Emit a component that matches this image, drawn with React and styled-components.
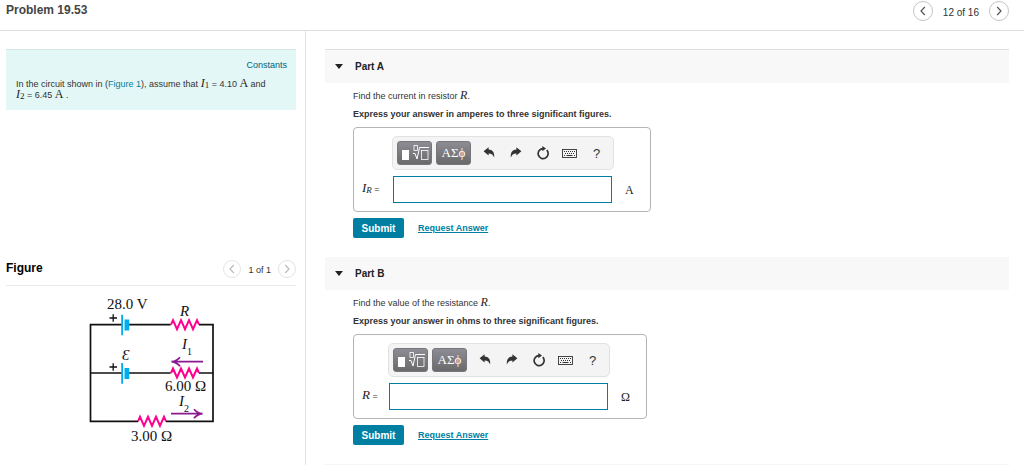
import React, { useState } from 'react';
import styled, { createGlobalStyle } from 'styled-components';

const GlobalStyle = createGlobalStyle`
  * {
    box-sizing: border-box;
  }

  body {
    margin: 0;
    background: #fff;
    color: #333;
    font-family: 'Liberation Sans', Arial, sans-serif;
    font-size: 9px;
    line-height: 11px;
  }

  button,
  input {
    font-family: inherit;
  }
`;

const Page = styled.div`
  display: flex;
  flex-direction: column;
  min-height: 100vh;
`;

const Header = styled.header`
  display: flex;
  justify-content: space-between;
  align-items: flex-start;
  height: 31px;
  padding: 1px 15px 0 6px;
  border-bottom: 1px solid #dcdcdc;
`;

const Title = styled.h1`
  margin: 0;
  font-size: 12px;
  line-height: 18px;
  color: #444;
`;

const Pager = styled.nav`
  display: flex;
  align-items: center;
  gap: ${props => (props.$small ? '7px' : '10px')};
  font-size: ${props => (props.$small ? '9px' : '10px')};
  color: #333;
`;

const PagerLabel = styled.span`
  padding-top: 3px;
`;

const PagerButton = styled.button`
  display: flex;
  align-items: center;
  justify-content: center;
  width: ${props => (props.$small ? '18px' : '20px')};
  height: ${props => (props.$small ? '18px' : '20px')};
  padding: 0;
  border: 1px solid ${props => (props.$small ? '#e4e4e4' : '#c4c4c4')};
  border-radius: 50%;
  background: #fff;
  color: ${props => (props.$small ? '#bbb' : '#555')};
`;

const Columns = styled.div`
  display: flex;
  flex: 1;
`;

const Side = styled.aside`
  flex: 0 0 306px;
  padding: 18px 9px 0 6px;
  border-right: 1px solid #dfe1ea;
`;

const Intro = styled.section`
  min-height: 61px;
  padding: 10px 9px 8px 10px;
  border-top: 1px solid #d3e4e3;
  background: #e3f7f6;
`;

const Constants = styled.div`
  margin-bottom: 8px;
  text-align: right;

  a {
    color: #00627c;
    text-decoration: none;
  }
`;

const Text = styled.p`
  margin: 0;

  a {
    color: #007fa3;
    text-decoration: none;
  }
`;

const IntroText = styled(Text)`
  padding-right: 12px;
`;

const Math = styled.span`
  font-family: 'Liberation Serif', 'Times New Roman', serif;
  font-size: 12px;
  line-height: 0;
  color: #222;

  sub {
    font-size: 9px;
    vertical-align: -1px;
  }
`;

const FigureHeader = styled.div`
  display: flex;
  justify-content: space-between;
  align-items: center;
  height: 28px;
  margin-top: 148px;
  padding-bottom: 6px;
  border-bottom: 1px solid #e8e8e8;
`;

const FigureTitle = styled.h2`
  margin: 0;
  font-size: 12px;
  color: #000;
`;

const Circuit = styled.svg`
  display: block;
  margin: 8px auto 0;
  font-family: 'Liberation Serif', 'Times New Roman', serif;
  font-size: 15px;
  fill: #111;
`;

const Main = styled.main`
  flex: 1;
  padding: 18px 15px 0 19px;
`;

const Parts = styled.div`
  border-top: 1px solid #e0e0e0;
  border-bottom: 1px solid #f4f4f4;
`;

const Part = styled.section`
  padding-bottom: 19px;
`;

const PartHeader = styled.h2`
  display: flex;
  align-items: center;
  gap: 12px;
  height: 33px;
  margin: 0;
  padding-left: 10px;
  background: #f8f8f8;
  color: #222;
  font-size: 10px;
`;

const PartBody = styled.div`
  padding: 8px 0 0 28px;
`;

const Instruction = styled.p`
  margin: 7px 0;
  font-weight: bold;
`;

const AnswerBox = styled.div`
  display: grid;
  grid-template-columns: ${props => props.$labelWidth} 222px 36px;
  row-gap: 6px;
  align-items: center;
  width: max-content;
  padding: 8px 0 8px 8px;
  border: 1px solid #b4b4b4;
  border-radius: 4px;
`;

const Toolbar = styled.div`
  grid-column: 2;
  display: flex;
  align-items: center;
  height: 34px;
  padding-left: 4px;
  border: 1px solid #e2e2e2;
  border-radius: 5px;
  background: #f4f4f4;
`;

const PaletteButton = styled.button`
  display: flex;
  align-items: center;
  justify-content: center;
  width: 35px;
  height: 24px;
  margin-right: 4px;
  padding: 0;
  border: 1px solid #77777b;
  border-radius: 3px;
  background: linear-gradient(#8d8c94, #6a6a6c);
  color: #fff;
  font-family: 'Liberation Serif', 'Times New Roman', serif;
  font-size: 13px;
`;

const ToolButton = styled.button`
  display: flex;
  align-items: center;
  justify-content: center;
  width: 27px;
  height: 24px;
  padding: 0;
  border: 0;
  background: none;
  color: #333;
  font-size: 13px;
`;

const AnswerLabel = styled.label`
  grid-column: 1;
  white-space: nowrap;

  ${Math} {
    font-size: 13px;
  }
`;

const AnswerInput = styled.input`
  width: 219px;
  height: 27px;
  margin-left: 1px;
  padding: 0 6px;
  border: 1px solid #007fa3;
  background: #fff;
  font-size: 12px;
  outline: none;
`;

const Unit = styled(Math)`
  padding-left: 11px;
`;

const Actions = styled.div`
  display: flex;
  align-items: center;
  gap: 14px;
  margin-top: 6px;
`;

const SubmitButton = styled.button`
  width: 51px;
  height: 20px;
  padding: 0;
  border: 0;
  border-radius: 2px;
  background: #007fa3;
  color: #fff;
  font-size: 10px;
  font-weight: bold;
`;

const RequestLink = styled.a`
  color: #007fa3;
  font-weight: bold;
`;

const Chevron = ({ left, size = 10 }) => (
  <svg width={size} height={size} viewBox="0 0 10 10" fill="none" stroke="currentColor" strokeWidth="1.2">
    <path d={left ? 'M6.8 1 3 5l3.8 4' : 'M3.2 1 7 5 3.2 9'} />
  </svg>
);

const TemplateIcon = () => (
  <svg width="29" height="18" viewBox="0 0 29 18" fill="none" stroke="#fff">
    <rect x="2" y="6" width="7" height="10" fill="#fff" stroke="none" />
    <rect x="14" y="1.5" width="3.5" height="5" strokeWidth="0.8" />
    <path d="M13 9.500h2l2 5.500L19.500 3.500H29" />
    <rect x="21.500" y="6.500" width="6.500" height="9" strokeWidth="0.8" />
  </svg>
);

const UndoIcon = () => (
  <svg width="12" height="12" viewBox="0 0 12 12" fill="currentColor">
    <path d="M0.600 4.200 5.600 0.200v2.400c3.800.1 5.900 2.500 5.600 8C10.200 8 8.800 6.600 5.600 6.500v2z" />
  </svg>
);

const RedoIcon = () => (
  <svg width="12" height="12" viewBox="0 0 12 12" fill="currentColor">
    <path d="M11.400 4.200 6.400 0.200v2.400c-3.800.1-5.900 2.500-5.600 8C1.800 8 3.200 6.600 6.400 6.500v2z" />
  </svg>
);

const ResetIcon = () => (
  <svg width="14" height="14" viewBox="0 0 14 14">
    <path d="M7.200 2.600a5 5 0 1 0 3.600 1.600" fill="none" stroke="currentColor" strokeWidth="1.700" />
    <path d="M6.300 0v5.200L10 2.600z" fill="currentColor" />
  </svg>
);

const KeyboardIcon = () => (
  <svg width="15" height="9" viewBox="0 0 15 9" fill="none" stroke="currentColor">
    <rect x="0.500" y="0.500" width="14" height="8" strokeWidth="0.9" />
    <path d="M2 2.500h11M3 4.500h10" strokeDasharray="1 1" />
    <path d="M2 6.500h1M4.500 6.500h6M12 6.500h1" />
  </svg>
);

const zigzag = 'l2-4.500 4 9 4-9 4 9 4-9 4 9 4-9 2 4.500';

const CircuitDiagram = () => (
  <Circuit width="130" height="152" viewBox="0 0 130 152" role="img" aria-label="Circuit">
    <g fill="none" stroke="#111" strokeWidth="1.700">
      <path d="M36 30.700H4.500V127.300H52M80 127.300H127V30.700H113M84.700 30.700H43" />
      <path d="M4.500 79H36M43 79H84.700M113 79H127" />
    </g>
    <g fill="none" stroke="#ff0090" strokeWidth="2">
      <path d={`M85 30.700${zigzag}`} />
      <path d={`M85 79${zigzag}`} />
      <path d={`M52 127.300${zigzag}`} />
    </g>
    <g fill="#00aeef">
      <path d="M35.200 20.700H37v20.600h-1.800zM38.500 25.500h4.800v11h-4.800z" />
      <path d="M35.200 69H37v20.700h-1.800zM38.500 74h4.800v11h-4.800z" />
    </g>
    <g fill="none" stroke="#8b1a8f" strokeWidth="1.700">
      <path d="M117 67.700H86M94 63.200Q91 67 85.500 67.700 91 68.500 94 72.200" />
      <path d="M85 119.700h31M108 115.200q3 3.800 8.500 4.500-5.500.8-8.500 4.500" />
    </g>
    <path d="M23.500 24h7.500M27.200 20.300v7.500M23.500 73h7.500M27.200 69.300v7.500" stroke="#111" strokeWidth="1.300" />
    <text x="21" y="15">28.0 V</text>
    <text x="94" y="22" fontStyle="italic">R</text>
    <text x="36" y="66" fontStyle="italic">Ɛ</text>
    <text x="96" y="55" fontStyle="italic">I</text>
    <text x="101" y="61" fontSize="10">1</text>
    <text x="79" y="97">6.00 Ω</text>
    <text x="93" y="112" fontStyle="italic">I</text>
    <text x="98" y="118" fontSize="10">2</text>
    <text x="45" y="147">3.00 Ω</text>
  </Circuit>
);

const AnswerPart = ({ id, name, question, instruction, label, labelWidth, unit }) => {
  const [answer, setAnswer] = useState('');

  return (
    <Part>
      <PartHeader>
        <svg width="8" height="6" viewBox="0 0 8 6" aria-hidden="true">
          <path d="M0 0h8L4 5z" fill="#222" />
        </svg>
        {name}
      </PartHeader>
      <PartBody>
        <Text>
          {question} <Math><i>R</i></Math>.
        </Text>
        <Instruction>{instruction}</Instruction>
        <AnswerBox $labelWidth={labelWidth}>
          <Toolbar>
            <PaletteButton aria-label="Templates"><TemplateIcon /></PaletteButton>
            <PaletteButton aria-label="Symbols">ΑΣϕ</PaletteButton>
            <ToolButton aria-label="Undo"><UndoIcon /></ToolButton>
            <ToolButton aria-label="Redo"><RedoIcon /></ToolButton>
            <ToolButton aria-label="Reset"><ResetIcon /></ToolButton>
            <ToolButton aria-label="Keyboard shortcuts"><KeyboardIcon /></ToolButton>
            <ToolButton aria-label="Help">?</ToolButton>
          </Toolbar>
          <AnswerLabel htmlFor={id}>
            <Math>{label}</Math> =
          </AnswerLabel>
          <AnswerInput id={id} value={answer} onChange={e => setAnswer(e.target.value)} />
          <Unit>{unit}</Unit>
        </AnswerBox>
        <Actions>
          <SubmitButton>Submit</SubmitButton>
          <RequestLink href="#request">Request Answer</RequestLink>
        </Actions>
      </PartBody>
    </Part>
  );
};

const App = () => (
  <Page>
    <GlobalStyle />
    <Header>
      <Title>Problem 19.53</Title>
      <Pager>
        <PagerButton aria-label="Previous problem"><Chevron left /></PagerButton>
        <PagerLabel>12 of 16</PagerLabel>
        <PagerButton aria-label="Next problem"><Chevron /></PagerButton>
      </Pager>
    </Header>
    <Columns>
      <Side>
        <Intro>
          <Constants><a href="#constants">Constants</a></Constants>
          <IntroText>
            In the circuit shown in (<a href="#figure">Figure 1</a>), assume that{' '}
            <Math><i>I</i><sub>1</sub></Math> = 4.10 <Math>A</Math> and{' '}
            <Math><i>I</i><sub>2</sub></Math> = 6.45 <Math>A</Math> .
          </IntroText>
        </Intro>
        <FigureHeader id="figure">
          <FigureTitle>Figure</FigureTitle>
          <Pager $small>
            <PagerButton $small aria-label="Previous figure"><Chevron left /></PagerButton>
            <PagerLabel>1 of 1</PagerLabel>
            <PagerButton $small aria-label="Next figure"><Chevron /></PagerButton>
          </Pager>
        </FigureHeader>
        <CircuitDiagram />
      </Side>
      <Main>
        <Parts>
          <AnswerPart
            id="part-a"
            name="Part A"
            question="Find the current in resistor"
            instruction="Express your answer in amperes to three significant figures."
            label={<><i>I</i><sub><i>R</i></sub></>}
            labelWidth="30px"
            unit="A"
          />
          <AnswerPart
            id="part-b"
            name="Part B"
            question="Find the value of the resistance"
            instruction="Express your answer in ohms to three significant figures."
            label={<i>R</i>}
            labelWidth="26px"
            unit="Ω"
          />
        </Parts>
      </Main>
    </Columns>
  </Page>
);

export default App;
